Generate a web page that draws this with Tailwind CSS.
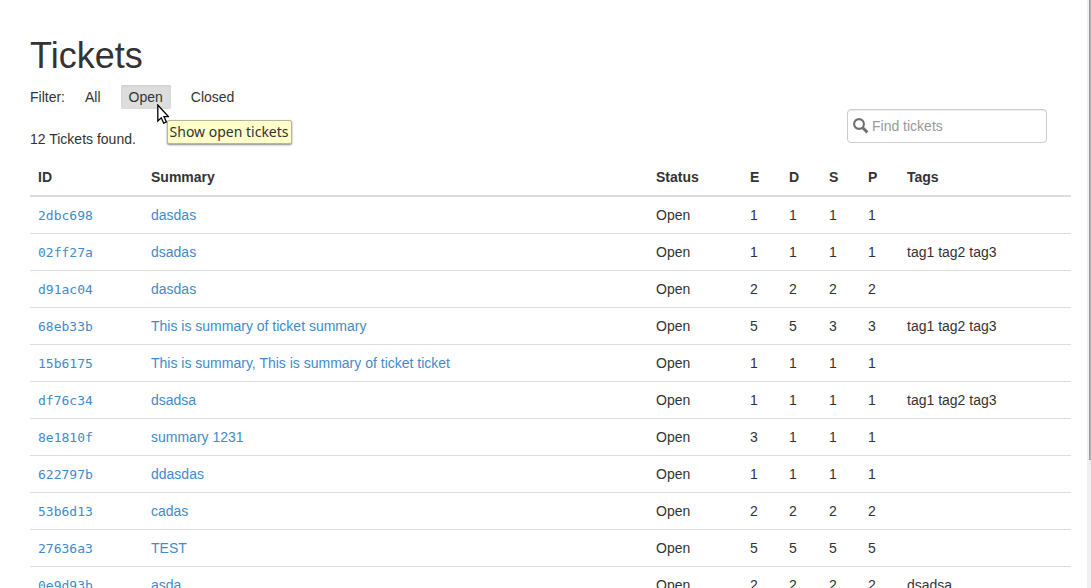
<!DOCTYPE html>
<html lang="en">
<head>
    <meta charset="UTF-8">
    <meta name="viewport" content="width=device-width, initial-scale=1.0">
    <title>Tickets</title>
    <script src="https://cdn.jsdelivr.net/npm/@tailwindcss/browser@4"></script>
</head>
<body class="h-screen overflow-hidden flex bg-white font-['Liberation_Sans',Arial,sans-serif] text-[14px] leading-5 text-[#333]">
    <main class="flex-1 min-w-0 pl-[30px] pr-4 pt-9">
        <h1 class="text-[36px] leading-10">Tickets</h1>
        <div class="flex justify-between">
            <div>
                <nav class="flex items-center gap-3 mt-[9px]" aria-label="Filter tickets">
                    <span>Filter:</span>
                    <a href="#all" class="px-2 py-0.5" title="Show all tickets">All</a>
                    <a href="#open" class="relative px-2 py-0.5 rounded-xs bg-[#ddd] shadow-[inset_0_1px_2px_#ccc]" aria-describedby="open-tip">Open
                        <svg class="absolute left-9 top-[19px] z-10 w-3 h-5" viewBox="0 0 12 20" aria-hidden="true">
                            <path d="M.8 1v16L4.3 13.8L6.7 19.2L9.4 18L7 12.6H11.4z" fill="#fff" stroke="#000" stroke-width="1.3" />
                        </svg>
                        <span id="open-tip" role="tooltip" class="absolute left-[46px] top-[35px] px-0.5 border border-[#b5b5a0] rounded-xs bg-[#ffffca] shadow-[0_1px_2px_#888] font-['Noto_Sans','Open_Sans',sans-serif] text-[14px] leading-[22px] text-[#333] whitespace-nowrap">Show open tickets</span>
                    </a>
                    <a href="#closed" class="px-2 py-0.5" title="Show closed tickets">Closed</a>
                </nav>
                <p class="mt-5">12 Tickets found.</p>
            </div>
            <form class="relative mt-[33px] mr-6" role="search">
                <label for="search" class="sr-only">Find tickets</label>
                <svg class="absolute left-1.5 top-[9px] w-4 h-4" viewBox="0 0 16 16" fill="none" stroke="#707070" aria-hidden="true">
                    <circle cx="6" cy="6" r="4.9" stroke-width="2.1" />
                    <path d="M9.7 9.7L14.4 14.4" stroke-width="3" />
                </svg>
                <input id="search" type="search" placeholder="Find tickets" class="block w-[200px] h-[34px] pl-6 pr-3 border border-[#ccc] rounded bg-transparent shadow-[inset_0_1px_1px_rgba(0,0,0,0.075)] placeholder:text-[#999]">
            </form>
        </div>
        <table class="w-full mt-2.5 table-fixed text-left">
            <thead>
                <tr class="border-b-2 border-[#ddd]">
                    <th class="w-[113px] p-2">ID</th>
                    <th class="p-2">Summary</th>
                    <th class="w-[94px] p-2">Status</th>
                    <th class="w-[39px] p-2">E</th>
                    <th class="w-10 p-2">D</th>
                    <th class="w-[39px] p-2">S</th>
                    <th class="w-[39px] p-2">P</th>
                    <th class="w-[172px] p-2">Tags</th>
                </tr>
            </thead>
            <tbody id="tickets"></tbody>
        </table>
    </main>
    <!-- Scroll rail -->
    <div class="w-1 h-full pl-0.5 bg-[#f0f0f0]" aria-hidden="true">
        <div class="h-[460px] border-l border-b border-[#999] bg-[#b8b8b8]"></div>
    </div>

    <script>
        // id, summary, E, D, S, P, tags
        const tickets = [
            ['2dbc698', 'dasdas', 1, 1, 1, 1, ''],
            ['02ff27a', 'dsadas', 1, 1, 1, 1, 'tag1 tag2 tag3'],
            ['d91ac04', 'dasdas', 2, 2, 2, 2, ''],
            ['68eb33b', 'This is summary of ticket summary', 5, 5, 3, 3, 'tag1 tag2 tag3'],
            ['15b6175', 'This is summary, This is summary of ticket ticket', 1, 1, 1, 1, ''],
            ['df76c34', 'dsadsa', 1, 1, 1, 1, 'tag1 tag2 tag3'],
            ['8e1810f', 'summary 1231', 3, 1, 1, 1, ''],
            ['622797b', 'ddasdas', 1, 1, 1, 1, ''],
            ['53b6d13', 'cadas', 2, 2, 2, 2, ''],
            ['27636a3', 'TEST', 5, 5, 5, 5, ''],
            ['0e9d93b', 'asda', 2, 2, 2, 2, 'dsadsa'],
        ];

        document.getElementById('tickets').innerHTML = tickets.map(([id, summary, e, d, s, p, tags]) => `
            <tr class="border-b border-[#ddd]">
                <td class="p-2"><a href="#${id}" class="font-['DejaVu_Sans_Mono',monospace] text-[13px] leading-none text-[#428bca]">${id}</a></td>
                <td class="p-2"><a href="#${id}" class="text-[#428bca]">${summary}</a></td>
                <td class="p-2">Open</td>
                <td class="p-2">${e}</td>
                <td class="p-2">${d}</td>
                <td class="p-2">${s}</td>
                <td class="p-2">${p}</td>
                <td class="p-2">${tags}</td>
            </tr>`).join('');
    </script>
</body>
</html>
